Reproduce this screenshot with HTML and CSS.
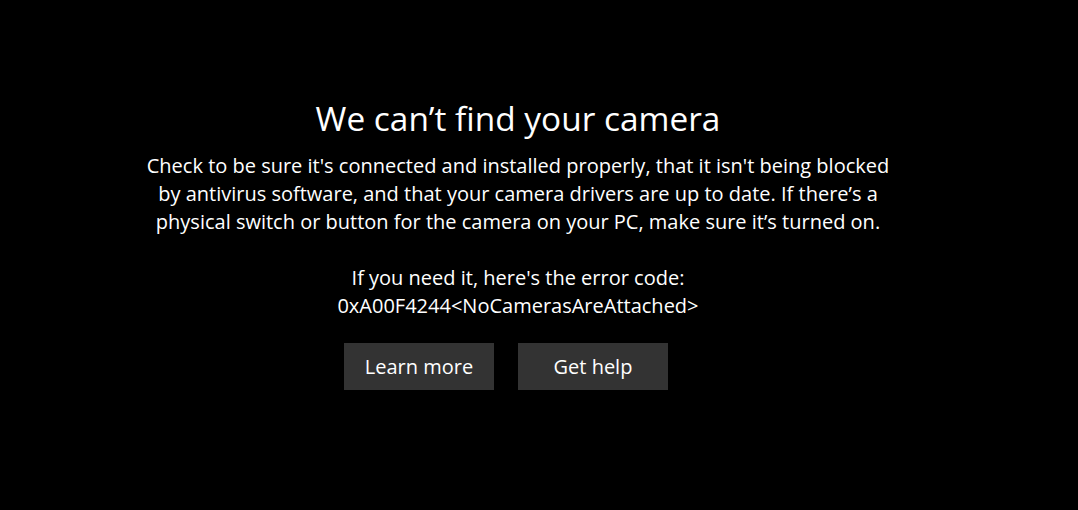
FILE: index.html
```html
<!DOCTYPE html>
<html lang="en">

<head>
    <meta charset="UTF-8">
    <title>Camera</title>
    <link rel="stylesheet" href="styles.css">
</head>

<body>
    <div class="page">
        <div class="message">
            <h1 class="title">We can’t find your camera</h1>
            <p class="text">Check to be sure it's connected and installed properly, that it isn't being blocked<br>
                by antivirus software, and that your camera drivers are up to date. If there’s a<br>
                physical switch or button for the camera on your PC, make sure it’s turned on.</p>
            <p class="code">If you need it, here's the error code:<br>
                0xA00F4244&lt;NoCamerasAreAttached&gt;</p>
            <div class="buttons">
                <button class="btn">Learn more</button>
                <button class="btn">Get help</button>
            </div>
        </div>
    </div>
</body>

</html>
```

FILE: styles.css
```css
* {
    margin: 0;
    padding: 0;
    box-sizing: border-box;
}

html,
body {
    height: 100%;
    background-color: #000;
}

body {
    color: #fff;
    font-family: "Open Sans", "Noto Sans", sans-serif;
}

.page {
    display: flex;
    justify-content: center;
    padding: 94px 42px 0 0;
}

.message {
    display: flex;
    flex-direction: column;
    align-items: center;
    text-align: center;
}

.title {
    font-size: 33.4px;
    font-weight: 400;
    line-height: 48px;
}

.text {
    font-size: 20px;
    line-height: 28px;
    margin-top: 10px;
}

.code {
    font-size: 20px;
    line-height: 28px;
    margin-top: 28px;
}

.buttons {
    display: flex;
    gap: 24px;
    margin-top: 23px;
    padding-right: 24px;
}

.btn {
    width: 150px;
    height: 47px;
    border: none;
    background-color: #333;
    color: #fff;
    font-family: inherit;
    font-size: 20px;
}
```
